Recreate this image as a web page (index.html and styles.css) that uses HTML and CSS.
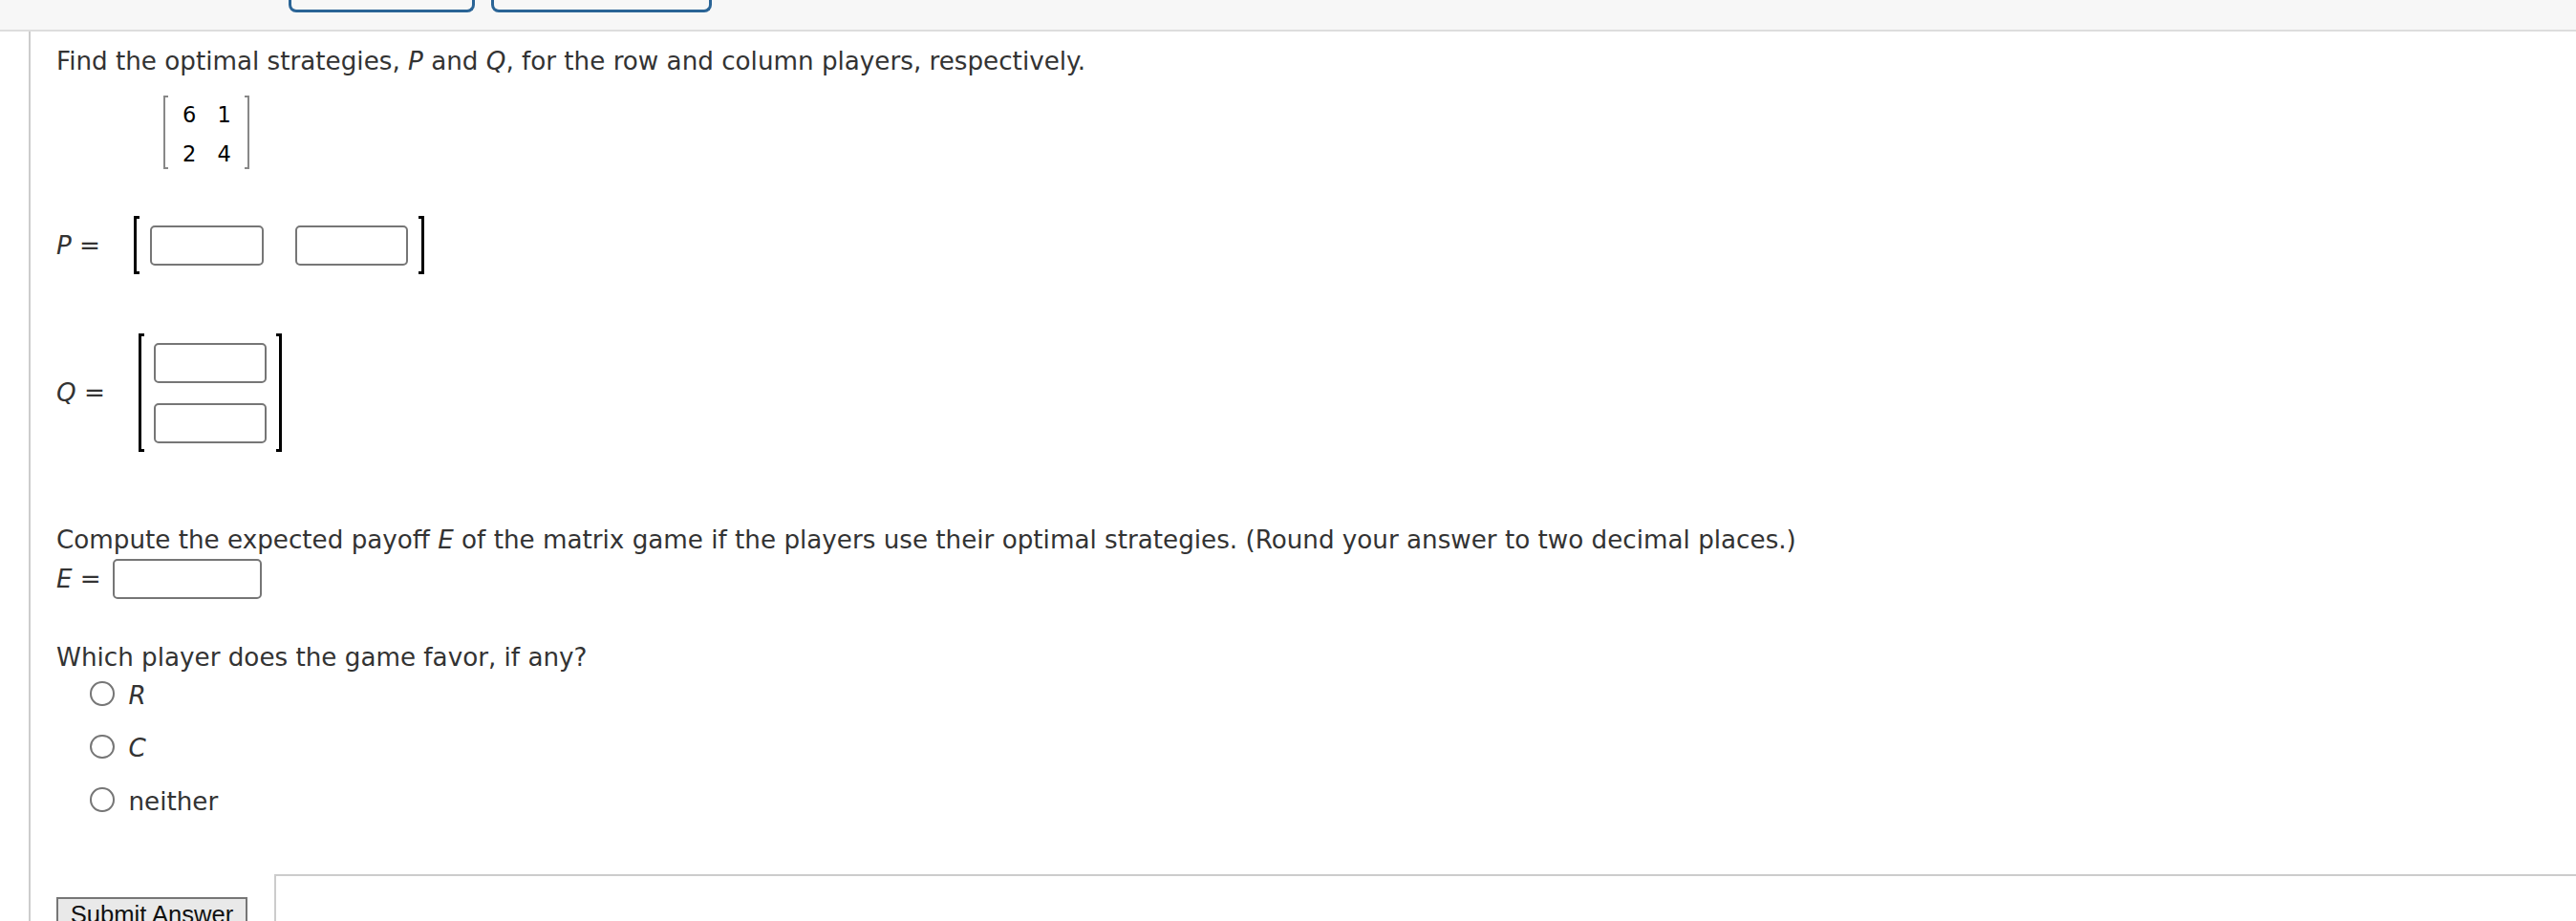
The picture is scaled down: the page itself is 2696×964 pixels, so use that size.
FILE: index.html
```html
<!DOCTYPE html>
<html lang="en">
  <head>
    <meta charset="UTF-8" />
    <meta name="viewport" content="width=device-width, initial-scale=1.0" />
    <title>Matrix Game - Optimal Strategies</title>
    <link rel="stylesheet" href="styles.css">
  </head>
  <body>
    <div class="page">
      <div class="toolbar">
        <span class="tool-btn tool-btn-first"></span>
        <span class="tool-btn tool-btn-second"></span>
      </div>

      <div class="question-panel">
        <p class="prompt">
          Find the optimal strategies, <i>P</i> and <i>Q</i>, for the row and
          column players, respectively.
        </p>

        <div class="matrix">
          <span class="mbracket mbracket-left"></span>
          <div class="matrix-cells">
            <span>6</span><span>1</span>
            <span>2</span><span>4</span>
          </div>
          <span class="mbracket mbracket-right"></span>
        </div>

        <div class="answer-row answer-p">
          <span class="math-label"><i>P</i> =</span>
          <div class="vector">
            <span class="bracket bracket-left"></span>
            <div class="vector-cells vector-cells-row">
              <input class="answer-box" type="text" aria-label="P1" />
              <input class="answer-box" type="text" aria-label="P2" />
            </div>
            <span class="bracket bracket-right"></span>
          </div>
        </div>

        <div class="answer-row answer-q">
          <span class="math-label"><i>Q</i> =</span>
          <div class="vector">
            <span class="bracket bracket-left"></span>
            <div class="vector-cells vector-cells-col">
              <input class="answer-box" type="text" aria-label="Q1" />
              <input class="answer-box" type="text" aria-label="Q2" />
            </div>
            <span class="bracket bracket-right"></span>
          </div>
        </div>

        <p class="prompt prompt-payoff">
          Compute the expected payoff <i>E</i> of the matrix game if the players
          use their optimal strategies. (Round your answer to two decimal places.)
        </p>
        <div class="payoff-row">
          <span class="math-label"><i>E</i> =</span>
          <input class="answer-box answer-box-wide" type="text" aria-label="E" />
        </div>

        <p class="prompt prompt-favor">Which player does the game favor, if any?</p>
        <div class="choices">
          <label class="choice">
            <input type="radio" name="favor" value="R" />
            <span><i>R</i></span>
          </label>
          <label class="choice">
            <input type="radio" name="favor" value="C" />
            <span><i>C</i></span>
          </label>
          <label class="choice">
            <input type="radio" name="favor" value="neither" />
            <span>neither</span>
          </label>
        </div>

        <div class="submit-row">
          <button class="submit-btn" type="button">Submit Answer</button>
          <div class="feedback-box"></div>
        </div>
      </div>
    </div>
  </body>
</html>
```

FILE: styles.css
```css
* {
  margin: 0;
  padding: 0;
  box-sizing: border-box;
}

body {
  font-family: Verdana, "DejaVu Sans", sans-serif;
  font-size: 26.2px;
  line-height: 30px;
  color: #333;
  background: white;
}

.page {
  height: 100vh;
  overflow: hidden;
}

/* top toolbar, scrolled so only the bottom of its buttons shows */
.toolbar {
  height: 33px;
  background: #f7f7f7;
  border-bottom: 2px solid #dddddd;
  display: flex;
  align-items: flex-start;
  gap: 17px;
  padding-left: 302px;
}

.tool-btn {
  height: 13px;
  border: 3px solid #2a6496;
  border-top: none;
  border-radius: 0 0 8px 8px;
}

.tool-btn-first {
  width: 195px;
}

.tool-btn-second {
  width: 231px;
}

.question-panel {
  margin-left: 30px;
  border-left: 2px solid #cccccc;
  padding: 16px 0 0 27px;
  min-height: 100%;
}

i {
  font-style: italic;
}

/* payoff matrix */
.matrix {
  display: flex;
  align-items: flex-start;
  margin: 21px 0 0 112px;
}

.mbracket {
  width: 5px;
  height: 77px;
  border: 2px solid #888;
}

.mbracket-left {
  border-right: none;
}

.mbracket-right {
  border-left: none;
}

.matrix-cells {
  display: grid;
  grid-template-columns: 36.5px 36.5px;
  grid-auto-rows: 41px;
  padding: 0 3px 0 4px;
  font-size: 22.5px;
  line-height: 41px;
  color: #000;
  text-align: center;
}

/* strategy vectors */
.answer-row {
  display: flex;
  align-items: center;
  gap: 35px;
}

.answer-p {
  margin-top: 44px;
}

.answer-q {
  margin-top: 62px;
}

.vector {
  display: flex;
}

.bracket {
  width: 6px;
  border: 3px solid #000;
}

.bracket-left {
  border-right: none;
}

.bracket-right {
  border-left: none;
}

.vector-cells {
  display: flex;
}

.vector-cells-row {
  gap: 33px;
  padding: 9.5px 11px;
}

.vector-cells-col {
  flex-direction: column;
  gap: 21px;
  padding: 9.5px 10px;
}

.answer-box {
  width: 118.5px;
  height: 42px;
  border: 2px solid #767676;
  border-radius: 5px;
  background: white;
  font: inherit;
}

.answer-box-wide {
  width: 156px;
}

.prompt-payoff {
  margin-top: 77px;
}

.payoff-row {
  display: flex;
  align-items: center;
  gap: 12px;
  margin-top: 5px;
}

.prompt-favor {
  margin-top: 46px;
}

/* radio choices */
.choices {
  display: flex;
  flex-direction: column;
  gap: 25.5px;
  margin-top: 8px;
}

.choice {
  display: flex;
  align-items: center;
  height: 30px;
  padding-left: 35px;
}

.choice input {
  appearance: none;
  width: 25.5px;
  height: 25.5px;
  border: 2px solid #767676;
  border-radius: 50%;
  background: white;
  margin-right: 15px;
}

.choice span {
  padding-top: 3px;
}

/* submit */
.submit-row {
  display: flex;
  align-items: flex-start;
  gap: 27.5px;
  margin-top: 63px;
}

.submit-btn {
  margin-top: 24px;
  width: 200px;
  padding: 2px 12px;
  font-family: "Liberation Sans", Arial, sans-serif;
  font-size: 25.6px;
  line-height: 29px;
  color: #111;
  background: #e9e9e9;
  border: 2px solid #767676;
  border-radius: 0;
}

.feedback-box {
  flex: 1;
  height: 120px;
  border: 2px solid #cccccc;
  border-right: none;
}
```
